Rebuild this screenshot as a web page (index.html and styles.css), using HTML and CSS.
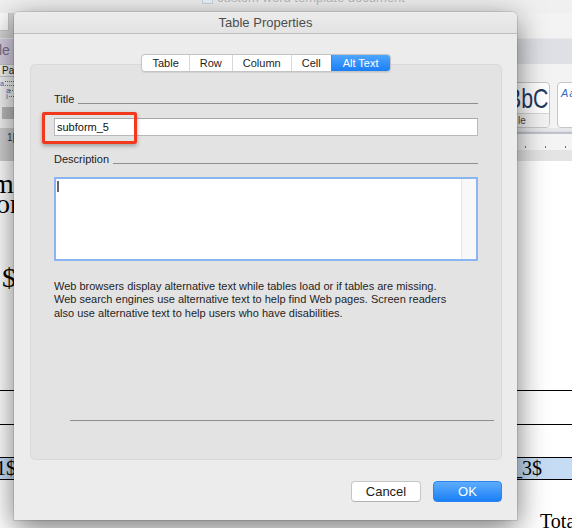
FILE: index.html
```html
<!DOCTYPE html>
<html>
<head>
<meta charset="utf-8">
<title>Table Properties</title>
<link rel="stylesheet" href="styles.css">
</head>
<body>
<div class="screen">
  <div class="bg">
    <div class="band wt">
      <div class="l"></div>
      <div class="m">
        <div class="wt-title"><span class="wt-icon"></span><span>custom word template document</span></div>
      </div>
      <div class="r"></div>
    </div>
    <div class="band tb">
      <div class="l"><div class="tb-btn"></div></div>
      <div class="m"></div>
      <div class="r"></div>
    </div>
    <div class="band rtabs">
      <div class="l"><span class="rt-text">le</span></div>
      <div class="m"></div>
      <div class="r"></div>
    </div>
    <div class="band ribbon">
      <div class="l">
        <svg width="14" height="64" viewBox="0 0 14 64">
          <rect x="0" y="0" width="14" height="13" fill="#f5f5f5"/>
          <line x1="0" y1="0.5" x2="14" y2="0.5" stroke="#c8c8c8"/>
          <line x1="0" y1="12.5" x2="14" y2="12.5" stroke="#c8c8c8"/>
          <text x="2" y="10" font-family="Liberation Sans, sans-serif" font-size="10" fill="#222">Pa</text>
          <text x="0" y="22" font-family="Liberation Sans, sans-serif" font-size="7" fill="#2f6fc4">a</text>
          <text x="6" y="29" font-family="Liberation Sans, sans-serif" font-size="8" fill="#2f6fc4">a</text>
          <line x1="5" y1="17.5" x2="14" y2="17.5" stroke="#777" stroke-dasharray="1 1"/>
          <line x1="5" y1="21.5" x2="14" y2="21.5" stroke="#777" stroke-dasharray="1 1"/>
          <line x1="10" y1="26.5" x2="14" y2="26.5" stroke="#777" stroke-dasharray="1 1"/>
          <text x="6" y="35" font-family="Liberation Sans, sans-serif" font-size="8" fill="#2f6fc4">i</text>
          <line x1="9" y1="32.5" x2="14" y2="32.5" stroke="#777" stroke-dasharray="1 1"/>
          <g stroke="#666" stroke-width="0.8">
            <line x1="2" y1="44" x2="14" y2="44"/>
            <line x1="2" y1="46" x2="14" y2="46"/>
            <line x1="2" y1="48" x2="14" y2="48"/>
            <line x1="2" y1="50" x2="14" y2="50"/>
            <line x1="2" y1="52" x2="14" y2="52"/>
            <line x1="2" y1="54" x2="14" y2="54"/>
          </g>
        </svg>
      </div>
      <div class="m"></div>
      <div class="r">
        <div class="gallery">
          <div class="scard big">
            <div class="scard-sample"><span class="bbc">BbC</span></div>
            <div class="scard-label">le</div>
          </div>
          <div class="scard small">
            <div class="scard-sample2">Aa</div>
          </div>
        </div>
      </div>
    </div>
    <div class="band ruler">
      <div class="l"><span class="rnum">1|</span></div>
      <div class="m"></div>
      <div class="r">
        <div class="ruler-top"></div>
        <div class="ruler-body"><span class="tick"></span><span class="tick"></span><span class="tick"></span></div>
        <div class="ruler-gap"></div>
      </div>
    </div>
    <div class="doc">
      <div class="dline big"><span class="lt i1">m</span></div>
      <div class="dline big"><span class="lt i2">or</span></div>
      <div class="dline big gap1"><span class="lt i3">$</span></div>
      <div class="trow r1"></div>
      <div class="trow r2"></div>
      <div class="trow r3 sel">
        <span class="lt i4">1$</span>
        <span class="rt">_3$</span>
      </div>
      <div class="total"><span class="rt tot">Total</span></div>
    </div>
  </div>

  <div class="dialog">
    <div class="dlg-title">Table Properties</div>
    <div class="dlg-body">
      <div class="tabs">
        <span class="tab">Table</span><span class="tab">Row</span><span class="tab">Column</span><span class="tab">Cell</span><span class="tab active">Alt Text</span>
      </div>
      <div class="group">
        <div class="flabel"><span>Title</span><span class="rule"></span></div>
        <div class="inwrap">
          <div class="tinput">subform_5</div>
          <div class="redbox"></div>
        </div>
        <div class="flabel desc"><span>Description</span><span class="rule"></span></div>
        <div class="tarea"><span class="caret"></span><span class="vscroll"></span></div>
        <p class="help">Web browsers display alternative text while tables load or if tables are missing.<br>Web search engines use alternative text to help find Web pages. Screen readers<br>also use alternative text to help users who have disabilities.</p>
        <div class="sep"></div>
      </div>
      <div class="buttons">
        <button class="btn cancel">Cancel</button>
        <button class="btn ok">OK</button>
      </div>
    </div>
  </div>
</div>
</body>
</html>
```

FILE: styles.css
```css
* { box-sizing: border-box; }
html, body { margin: 0; padding: 0; }
body {
  width: 572px;
  height: 528px;
  overflow: hidden;
  font-family: "Liberation Sans", Arial, sans-serif;
  background: #fff;
}
.screen {
  position: relative;
  width: 572px;
  height: 528px;
  overflow: hidden;
  background: #fff;
}

/* ---------- background word window ---------- */
.bg {
  display: flex;
  flex-direction: column;
  width: 572px;
  height: 528px;
}
.band { display: flex; flex: none; }
.band .l { width: 14px; flex: none; overflow: hidden; }
.band .m { flex: 1; min-width: 0; }
.band .r { width: 55px; flex: none; overflow: hidden; }

.wt { height: 13px; background: #f0f0f0; overflow: hidden; }
.wt-title {
  display: flex;
  align-items: center;
  gap: 4px;
  margin: -10px 0 0 188px;
  font-size: 13px;
  line-height: 15px;
  color: #b9b9b9;
  white-space: nowrap;
}
.wt-icon {
  width: 11px;
  height: 13px;
  border: 1px solid #c9d6e6;
  background: #eef3fa;
}

.tb { height: 25px; background: #f3f3f3; }
.tb .l { background: #d3d3d3; }
.tb-btn { width: 9px; height: 18px; background: #fbfbfb; border-right: 1px solid #c4c4c4; border-bottom: 1px solid #c4c4c4; }

.rtabs { height: 26px; background: #dfe0e5; border-top: 1px solid #e9e9ec; }
.rtabs .l { background: #d7cfe2; }
.rt-text {
  display: block;
  margin: 3px 0 0 -1px;
  font-size: 14px;
  line-height: 16px;
  color: #7a6f88;
}

.ribbon { height: 64px; background: #f3f3f3; }
.ribbon .l svg { display: block; }
.gallery { display: flex; gap: 7px; padding-top: 18px; margin-left: -40px; }
.scard {
  height: 46px;
  flex: none;
  border: 1px solid #c6c6c6;
  border-radius: 4px;
  background: #fff;
  display: flex;
  flex-direction: column;
  overflow: hidden;
}
.scard.big { width: 73px; }
.scard.small { width: 40px; }
.scard-sample {
  height: 30px;
  display: flex;
  justify-content: flex-end;
  padding-right: 1px;
  font-size: 28px;
  line-height: 31px;
  color: #1f3a5f;
  white-space: nowrap;
}
.bbc {
  display: block;
  transform: scaleX(0.76);
  transform-origin: right center;
}
.scard-label {
  flex: 1;
  border-top: 1px solid #d6d6d6;
  background: #f2f2f2;
  font-size: 10px;
  line-height: 14px;
  color: #444;
  padding-left: 40px;
}
.scard-sample2 {
  padding: 4px 0 0 3px;
  font-size: 11px;
  font-style: italic;
  color: #3d6cbf;
  letter-spacing: 1px;
}

.ruler { height: 33px; background: #e2e2e2; }
.ruler .l { background: #d0d0d0; }
.rnum {
  display: block;
  margin: 4px 0 0 7px;
  font-size: 10px;
  line-height: 12px;
  color: #333;
}
.ruler .r { display: flex; flex-direction: column; background: #f4f4f4; }
.ruler-top { height: 6px; border-top: 3px solid #e6e7ea; border-bottom: 2px solid #bfc3cc; background: #d9dbe0; }
.ruler-body { height: 16px; display: flex; align-items: flex-end; padding: 0 0 2px 8px; gap: 19px; }
.tick { width: 1px; height: 2px; background: #6f6f6f; }
.ruler-gap { flex: 1; background: #e4e4e4; }

.doc {
  flex: 1;
  background: #fff;
  padding-top: 12.5px;
  font-family: "Liberation Serif", "Times New Roman", serif;
  color: #000;
}
.dline {
  display: flex;
  height: 20px;
  font-size: 28px;
  line-height: 20px;
  white-space: nowrap;
}
.gap1 { margin-top: 54px; }
.lt { display: block; }
.i1 { margin-left: -8px; }
.i2 { margin-left: -4px; }
.i3 { margin-left: 2px; }
.trow {
  display: flex;
  border-top: 1px solid #000;
  font-size: 20px;
  white-space: nowrap;
}
.r1 { margin-top: 102.5px; height: 34px; }
.r2 { height: 33px; }
.r3 {
  height: 23px;
  line-height: 21px;
  border-bottom: 1px solid #000;
  background: #c6dcf5;
}
.i4 { margin-left: -4px; }
.rt { display: block; margin-left: auto; width: 55px; padding-left: 0; text-indent: -5px; }
.total { display: flex; margin-top: 31px; font-size: 20px; line-height: 20px; white-space: nowrap; }
.tot { text-indent: 23px; }

/* ---------- dialog ---------- */
.dialog {
  position: absolute;
  left: 14px;
  top: 12px;
  width: 503px;
  height: 508px;
  background: #ececec;
  border-radius: 5px 5px 0 0;
  box-shadow: 0 8px 30px rgba(0, 0, 0, 0.55), 0 0 0 1px rgba(0, 0, 0, 0.1);
  display: flex;
  flex-direction: column;
}
.dlg-title {
  height: 22px;
  flex: none;
  border-bottom: 1px solid #bdbdbd;
  background: linear-gradient(#ececec, #e3e3e3);
  border-radius: 5px 5px 0 0;
  font-size: 13px;
  line-height: 21px;
  color: #4d4d4d;
  text-align: center;
}
.dlg-body {
  flex: 1;
  display: flex;
  flex-direction: column;
  padding: 20px 15px 0 16px;
}
.tabs {
  align-self: center;
  display: flex;
  height: 18px;
  border: 1px solid #c4c4c4;
  border-radius: 4px;
  background: #fff;
  position: relative;
  z-index: 1;
  font-size: 11px;
  overflow: hidden;
  box-shadow: 0 0.5px 1px rgba(0, 0, 0, 0.08);
}
.tab {
  padding: 0 10px;
  line-height: 16px;
  color: #1d1d1d;
  border-left: 1px solid #d8d8d8;
}
.tab:first-child { border-left: 0; }
.tab.active {
  background: linear-gradient(#4ea5fd, #1a7ef6);
  color: #fff;
  border-left-color: #2d88f6;
  padding: 0 11px;
}

.group {
  margin-top: -8px;
  height: 396px;
  flex: none;
  background: #e3e3e3;
  border: 1px solid #d9d9d9;
  border-radius: 5px;
  padding: 27px 23px 0;
  display: flex;
  flex-direction: column;
}
.flabel {
  display: flex;
  height: 14px;
  line-height: 14px;
  font-size: 11px;
  color: #222;
}
.flabel .rule {
  flex: 1;
  margin: 10.5px 0 0 4px;
  height: 1px;
  background: #8f8f8f;
}
.flabel.desc { margin-top: 16px; }
.inwrap { position: relative; margin-top: 12px; }
.tinput {
  height: 18px;
  background: #fff;
  border: 1px solid #bababa;
  border-top-color: #a9a9a9;
  font-size: 11px;
  line-height: 16px;
  padding-left: 2px;
  color: #111;
}
.redbox {
  position: absolute;
  left: -12px;
  top: -6px;
  width: 95px;
  height: 32px;
  border: 3px solid #f13a1d;
  border-radius: 2px;
  box-shadow: 0 2px 4px rgba(0, 0, 0, 0.3);
}
.tarea {
  margin-top: 11px;
  height: 84px;
  flex: none;
  background: #fff;
  border: 2px solid #8ab5f1;
  display: flex;
}
.caret {
  width: 2px;
  height: 11px;
  margin: 2px 0 0 1px;
  background: #666;
}
.vscroll {
  margin-left: auto;
  width: 15px;
  background: #f8f8f8;
  border-left: 1px solid #e6e6e6;
}
.help {
  margin: 19px 0 0;
  font-size: 11px;
  line-height: 13.3px;
  color: #1f1f1f;
  white-space: nowrap;
}
.sep {
  margin: auto -16px 38px 16px;
  height: 1px;
  flex: none;
  background: #8e8e8e;
}
.buttons {
  display: flex;
  justify-content: flex-end;
  gap: 12px;
  margin-top: 21px;
}
.btn {
  height: 21px;
  padding: 0;
  font-family: "Liberation Sans", Arial, sans-serif;
  font-size: 13px;
  line-height: 19px;
  border-radius: 4px;
}
.cancel {
  width: 70px;
  background: #fff;
  border: 1px solid #c6c6c6;
  border-bottom-color: #b2b2b2;
  color: #1b1b1b;
}
.ok {
  width: 69px;
  background: linear-gradient(#5dadfc, #1b7ff6);
  border: 1px solid #2b85f1;
  color: #fff;
}
```
